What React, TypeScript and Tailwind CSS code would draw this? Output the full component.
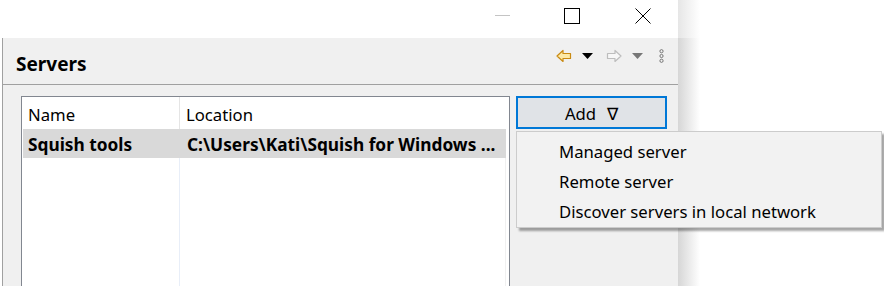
import React from 'react';

function BackArrow() {
  return (
    <svg width="16" height="14" viewBox="0 0 16 14">
      <path d="M1 7 L7 1.5 V4.5 H14.5 V9.5 H7 V12.5 Z" fill="#fde9a6" stroke="#c98a12" strokeWidth="1.2" strokeLinejoin="round" />
    </svg>
  );
}

function ForwardArrow() {
  return (
    <svg width="16" height="14" viewBox="0 0 16 14">
      <path d="M15 7 L9 1.5 V4.5 H1.5 V9.5 H9 V12.5 Z" fill="#f7f7f7" stroke="#bdbdbd" strokeWidth="1.2" strokeLinejoin="round" />
    </svg>
  );
}

function Caret({ color }: { color: string }) {
  return (
    <svg width="11" height="6" viewBox="0 0 11 6">
      <path d="M0 0 H11 L5.5 6 Z" fill={color} />
    </svg>
  );
}

function Kebab() {
  return (
    <svg width="5" height="14" viewBox="0 0 5 14">
      <circle cx="2.5" cy="2.2" r="1.6" fill="none" stroke="#777" strokeWidth="1" />
      <circle cx="2.5" cy="7" r="1.6" fill="none" stroke="#777" strokeWidth="1" />
      <circle cx="2.5" cy="11.8" r="1.6" fill="none" stroke="#777" strokeWidth="1" />
    </svg>
  );
}

export default function App() {
  const menuItems = ['Managed server', 'Remote server', 'Discover servers in local network'];

  return (
    <div className="relative w-[884px] h-[286px] bg-white overflow-hidden font-['Noto_Sans',sans-serif] text-black">
      <div className="flex h-full">
        {/* Window */}
        <div className="ml-[2px] w-[676px] flex flex-col">
          {/* Title bar */}
          <div className="h-[38px] shrink-0 bg-white flex items-center justify-end">
            <div className="w-[15px] h-px bg-[#c4c4c4] mr-[54px] mt-[-8px]" />
            <div className="w-[16px] h-[16px] border border-black mr-[55px] mt-[-7px]" />
            <svg width="16" height="16" viewBox="0 0 16 16" className="mr-[27px] mt-[-7px]">
              <path d="M0.5 0.5 L15.5 15.5 M15.5 0.5 L0.5 15.5" stroke="black" strokeWidth="1" />
            </svg>
          </div>

          {/* Body */}
          <div className="flex-1 min-h-0 bg-[#f0f0f0] border-l border-[#a0a0a0] flex flex-col">
            <div className="h-[47px] shrink-0 border-b border-[#a0a0a0] flex items-center pl-[13px] pr-[14px]">
              <span className="text-[19px] font-bold mt-[6px]">Servers</span>
              <div className="ml-auto flex items-center mt-[-10px]">
                <BackArrow />
                <span className="ml-[10px]"><Caret color="#000" /></span>
                <span className="ml-[13px]"><ForwardArrow /></span>
                <span className="ml-[10px]"><Caret color="#777" /></span>
                <span className="ml-[16px]"><Kebab /></span>
              </div>
            </div>

            <div className="flex pt-[11px] pl-[18px] gap-[6px] flex-1 min-h-0">
              {/* Table */}
              <div className="w-[489px] h-[200px] shrink-0 border border-[#828790] bg-white flex flex-col text-[16.7px]">
                <div className="flex h-[32px] shrink-0 items-center">
                  <div className="w-[158px] pl-[6px] pt-[3px] border-r border-[#e5e5e5] h-full flex items-center">Name</div>
                  <div className="pl-[6px] pt-[3px]">Location</div>
                </div>
                <div className="flex h-[29px] shrink-0 items-center bg-[#d9d9d9] mr-[3px] ml-px pt-[2px] font-bold text-[17.3px]">
                  <div className="w-[157px] pl-[5px]">Squish tools</div>
                  <div className="pl-[7px] whitespace-nowrap">C:\Users\Kati\Squish for Windows ...</div>
                </div>
                <div className="flex flex-1">
                  <div className="w-[158px] border-r border-[#e8eef8]" />
                  <div className="flex-1 border-r border-[#f0f0f0] mr-[3px]" />
                </div>
              </div>

              {/* Buttons */}
              <div className="flex flex-col gap-[2px]">
                <div className="w-[151px] h-[33px] border-2 border-[#0078d7] bg-[#e0e3e7] flex items-center justify-center pt-[2px] text-[16.7px]">
                  <span>Add</span>
                  <span className="ml-[11px] text-[17px]">∇</span>
                </div>
                <div className="w-[151px] h-[33px] border border-[#adadad] bg-[#e1e1e1]" />
              </div>
            </div>
          </div>
        </div>

        {/* Window shadow */}
        <div className="w-[22px] h-full flex flex-col">
          <div className="h-[38px] bg-gradient-to-r from-[#e6e6e6] to-white" />
          <div className="flex-1 bg-gradient-to-r from-[#d6d6d6] to-white" />
        </div>
      </div>

      {/* Dropdown menu */}
      <div className="absolute left-[516px] top-[131px] w-[366px] h-[97px] bg-[#f2f2f2] border border-[#cccccc] shadow-[3px_3px_2px_rgba(0,0,0,0.35)] flex flex-col pt-[4px] text-[16.7px]">
        {menuItems.map((item) => (
          <div key={item} className="h-[30.5px] flex items-center pl-[42px]">
            {item}
          </div>
        ))}
      </div>
    </div>
  );
}
